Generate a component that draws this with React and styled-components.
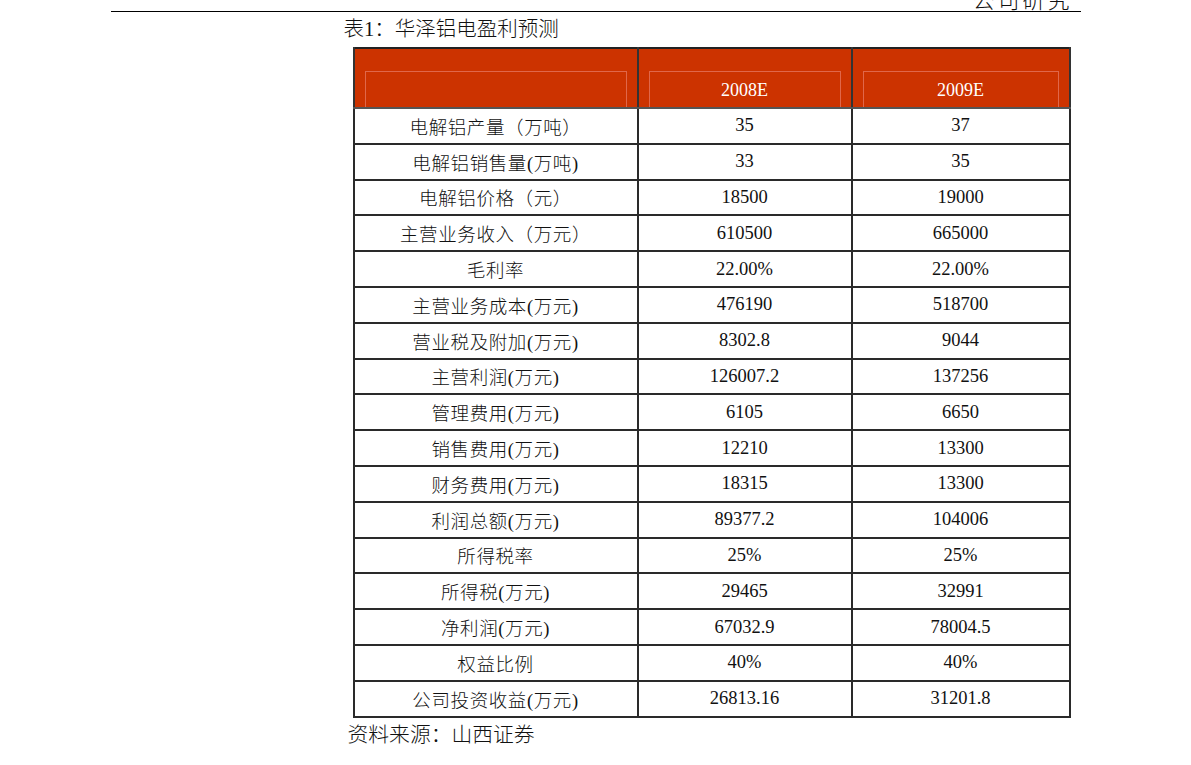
import React from "react";
import styled, { createGlobalStyle } from "styled-components";

const GlobalStyle = createGlobalStyle`
  html, body {
    margin: 0;
    padding: 0;
    background: #fff;
  }
  body {
    font-family: "Liberation Serif", "Noto Sans CJK SC", serif;
    font-weight: 300;
    color: #111;
    overflow: hidden;
  }
`;

const Page = styled.div`
  width: 970px;
  margin: 0 auto;
`;

const RunningHead = styled.div`
  margin-top: -14px;
  height: 25px;
  border-bottom: 1px solid #000;
  display: flex;
  justify-content: flex-end;
  align-items: flex-end;
  padding-right: 8px;
  font-family: "Noto Sans CJK SC", sans-serif;
  font-size: 22px;
  line-height: 25px;
  letter-spacing: 3px;
  overflow: hidden;
`;

const Caption = styled.div`
  margin: 4px 0 0 233px;
  font-size: 20.5px;
  line-height: 27px;
`;

const Wrap = styled.div`
  margin: 4px 0 0 242px;
`;

const Table = styled.table`
  border-collapse: collapse;
  width: 716px;
  border: 2px solid #222;
  table-layout: fixed;
  font-size: 18.5px;
`;

const HeadCell = styled.th`
  background: #cc3300;
  height: 58px;
  padding: 0;
  border-left: 2px solid #333;
  border-right: 2px solid #333;
  border-bottom: 2px solid #555;
  vertical-align: bottom;
  font-weight: normal;
  color: #fff;
`;

const HeadInner = styled.div`
  margin: 0 10px;
  height: 33px;
  border: 1px solid #e0674a;
  border-bottom: none;
  display: flex;
  align-items: center;
  justify-content: center;
  font-size: 18px;
  padding-top: 2px;
`;

const Cell = styled.td`
  height: 33.8px;
  padding: 0;
  border: 2px solid #2a2a2a;
  text-align: center;
  vertical-align: middle;
  white-space: nowrap;
  letter-spacing: ${(p) => (p.$label ? "0.6px" : "0")};
`;

const Source = styled.div`
  margin: 3px 0 0 237px;
  font-size: 20.8px;
  line-height: 27px;
`;

const rows = [
  ["电解铝产量（万吨）", "35", "37"],
  ["电解铝销售量(万吨)", "33", "35"],
  ["电解铝价格（元）", "18500", "19000"],
  ["主营业务收入（万元）", "610500", "665000"],
  ["毛利率", "22.00%", "22.00%"],
  ["主营业务成本(万元)", "476190", "518700"],
  ["营业税及附加(万元)", "8302.8", "9044"],
  ["主营利润(万元)", "126007.2", "137256"],
  ["管理费用(万元)", "6105", "6650"],
  ["销售费用(万元)", "12210", "13300"],
  ["财务费用(万元)", "18315", "13300"],
  ["利润总额(万元)", "89377.2", "104006"],
  ["所得税率", "25%", "25%"],
  ["所得税(万元)", "29465", "32991"],
  ["净利润(万元)", "67032.9", "78004.5"],
  ["权益比例", "40%", "40%"],
  ["公司投资收益(万元)", "26813.16", "31201.8"],
];

export default function App() {
  return (
    <>
      <GlobalStyle />
      <Page>
        <RunningHead>公司研究</RunningHead>
        <Caption>表1：华泽铝电盈利预测</Caption>
        <Wrap>
          <Table>
            <colgroup>
              <col style={{ width: "284px" }} />
              <col style={{ width: "214px" }} />
              <col style={{ width: "218px" }} />
            </colgroup>
            <thead>
              <tr>
                <HeadCell>
                  <HeadInner />
                </HeadCell>
                <HeadCell>
                  <HeadInner>2008E</HeadInner>
                </HeadCell>
                <HeadCell>
                  <HeadInner>2009E</HeadInner>
                </HeadCell>
              </tr>
            </thead>
            <tbody>
              {rows.map((r) => (
                <tr key={r[0]}>
                  <Cell $label>{r[0]}</Cell>
                  <Cell>{r[1]}</Cell>
                  <Cell>{r[2]}</Cell>
                </tr>
              ))}
            </tbody>
          </Table>
        </Wrap>
        <Source>资料来源：山西证券</Source>
      </Page>
    </>
  );
}
